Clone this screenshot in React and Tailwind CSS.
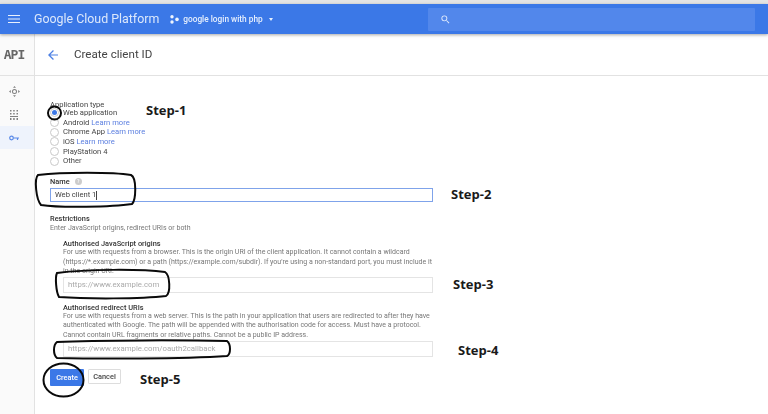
const ff = { fontFamily: 'Roboto, "Liberation Sans", sans-serif' };

function Radio({ checked }) {
  return (
    <span className="w-[9px] h-[9px] rounded-full border border-[#c8c8c8] bg-white flex items-center justify-center shrink-0">
      {checked && <span className="w-[5px] h-[5px] rounded-full bg-[#3b78e7]" />}
    </span>
  );
}

function Option({ label, learn, checked }) {
  return (
    <div className="h-[9.7px] flex items-center gap-[4px] text-[7.6px] text-[#444] leading-none">
      <Radio checked={checked} />
      <span>{label}{learn && <span className="text-[#5b7fe0]"> Learn more</span>}</span>
    </div>
  );
}

function Step({ className, children }) {
  return (
    <div className={"absolute text-[13px] font-bold leading-none text-[#1a1a1a] " + className} style={{ fontFamily: '"Open Sans", "Noto Sans", sans-serif' }}>
      {children}
    </div>
  );
}

export default function App() {
  return (
    <div className="relative w-[768px] h-[414px] overflow-hidden bg-white flex flex-col" style={ff}>
      <div className="h-[4px] bg-[#e4e4e4] shrink-0" />
      <header className="h-[30px] shrink-0 bg-[#3b78e7] flex items-center shadow-[0_1px_3px_rgba(0,0,0,0.35)] z-10 blur-[0.35px]">
        <svg className="ml-[8px] w-[12px] h-[8px]" viewBox="0 0 12 8"><path d="M0 .5h12M0 4h12M0 7.500h12" stroke="#e8f0fd" strokeWidth="1" /></svg>
        <span className="ml-[14px] text-[12.4px] text-[#dce8fb] leading-none whitespace-nowrap">Google Cloud Platform</span>
        <svg className="ml-[11px] w-[10px] h-[9px]" viewBox="0 0 10 9" fill="#eef4fe"><circle cx="2" cy="1.700" r="1.700" /><circle cx="2" cy="7" r="1.700" /><circle cx="7" cy="4.400" r="1.800" /></svg>
        <span className="ml-[3px] text-[8.3px] font-medium text-[#e6effd] leading-none whitespace-nowrap">google login with php</span>
        <span className="ml-[6px] w-0 h-0 border-x-[2.5px] border-x-transparent border-t-[3px] border-t-[#e6effd]" />
        <div className="ml-[155px] w-[327px] h-[23px] bg-[#5287eb] rounded-[1px] flex items-center pl-[12px]">
          <svg className="w-[11px] h-[11px]" viewBox="0 0 24 24" fill="#e3ecfc"><path d="M15.500 14h-.79l-.28-.27A6.470 6.470 0 0 0 16 9.500 6.500 6.500 0 1 0 9.500 16c1.610 0 3.090-.59 4.230-1.570l.27.28v.79l5 4.990L20.490 19l-4.990-5zm-6 0C7.010 14 5 11.990 5 9.500S7.010 5 9.500 5 14 7.010 14 9.500 11.990 14 9.500 14z" /></svg>
        </div>
      </header>

      <div className="flex-1 flex min-h-0">
        <aside className="w-[35px] shrink-0 border-r border-[#e2e2e2] bg-[#fafafa] flex flex-col blur-[0.35px]">
          <div className="h-[42px] shrink-0 border-b border-[#e2e2e2] flex items-center justify-center pr-[6px] text-[13px] font-bold tracking-[-1px] text-[#666] leading-none" style={{ fontFamily: '"DejaVu Sans Mono", monospace' }}>API</div>
          <div className="h-[23px] mt-[4px] flex items-center justify-center pr-[6px]">
            <svg className="w-[11px] h-[11px]" viewBox="0 0 12 12" fill="none" stroke="#808080" strokeWidth="1.100"><circle cx="6" cy="6" r="2.200" /><path d="M6 0l1.600 2H4.400zM6 12l1.600-2H4.400zM0 6l2-1.600v3.200zM12 6l-2-1.600v3.200z" fill="#808080" stroke="none" /></svg>
          </div>
          <div className="h-[23px] flex items-center justify-center pr-[6px]">
            <svg className="w-[8px] h-[10px]" viewBox="0 0 8 10" fill="#808080"><path d="M0 0h1.500v1.500H0zM3.200 0h1.500v1.500H3.200zM6.500 0H8v1.500H6.500zM0 3h1.500v1.500H0zM3.200 3h1.500v1.500H3.200zM6.500 3H8v1.500H6.500zM0 6h8v1H0zM0 8h1.500v2H0zM3.200 8h1.500v2H3.200zM6.500 8H8v2H6.500z" /></svg>
          </div>
          <div className="h-[23px] bg-[#eef3fc] flex items-center justify-center pr-[6px]">
            <svg className="w-[10px] h-[6px]" viewBox="0 0 10 6" fill="none"><circle cx="2.500" cy="3" r="1.800" stroke="#5a8ae8" strokeWidth="1.200" /><path d="M4.300 3H10M8.500 3v2" stroke="#5a8ae8" strokeWidth="1.200" /></svg>
          </div>
        </aside>

        <main className="flex-1 min-w-0 flex flex-col blur-[0.4px]">
          <div className="h-[42px] shrink-0 border-b border-[#e2e2e2] flex items-center pl-[12px]">
            <svg className="w-[12px] h-[12px]" viewBox="0 0 24 24" fill="#4d80e4"><path d="M22 11H6.800l7-7L12 2 2 12l10 10 1.800-2-7-7H22z" /></svg>
            <span className="ml-[15px] mt-[1px] text-[11.6px] text-[#444] leading-none">Create client ID</span>
          </div>

          <div className="pl-[15px] w-[398px] pt-[25px]">
            <div className="text-[7.6px] text-[#444] leading-none h-[7px]">Application type</div>
            <Option label="Web application" checked />
            <Option label="Android" learn />
            <Option label="Chrome App" learn />
            <Option label="iOS" learn />
            <Option label="PlayStation 4" />
            <Option label="Other" />

            <div className="mt-[9px] h-[13px] flex items-center gap-[5px] text-[7.400px] font-medium text-[#333] leading-none">
              Name
              <span className="w-[7px] h-[7px] rounded-full bg-[#ccc] text-white text-[5px] flex items-center justify-center">?</span>
            </div>
            <div className="h-[14px] border border-[#7fa3ea] flex items-center pl-[4px] text-[7.600px] text-[#444] leading-none">
              Web client 1<span className="w-px h-[9px] bg-[#444]" />
            </div>

            <div className="mt-[12px] text-[7.400px] font-medium text-[#333] leading-[9px]">Restrictions</div>
            <div className="text-[7px] text-[#777] leading-[10px]">Enter JavaScript origins, redirect URIs or both</div>

            <div className="pl-[13px] mt-[6px]">
              <div className="text-[7.400px] font-medium text-[#333] leading-[9px]">Authorised JavaScript origins</div>
              <div className="text-[7px] text-[#777] leading-[9.500px] whitespace-nowrap">
                <div>For use with requests from a browser. This is the origin URI of the client application. It cannot contain a wildcard</div>
                <div>(https://*.example.com) or a path (https://example.com/subdir). If you're using a non-standard port, you must include it</div>
                <div>in the origin URI.</div>
              </div>
              <div className="h-[16px] border border-[#e4e4e4] flex items-center pl-[4px] text-[7.800px] text-[#aaa] leading-none">https://www.example.com</div>

              <div className="mt-[10px] text-[7.400px] font-medium text-[#333] leading-[9px]">Authorised redirect URIs</div>
              <div className="text-[7px] text-[#777] leading-[9.500px] whitespace-nowrap">
                <div>For use with requests from a web server. This is the path in your application that users are redirected to after they have</div>
                <div>authenticated with Google. The path will be appended with the authorisation code for access. Must have a protocol.</div>
                <div>Cannot contain URL fragments or relative paths. Cannot be a public IP address.</div>
              </div>
              <div className="mt-[1px] h-[16px] border border-[#e4e4e4] flex items-center pl-[4px] text-[7.800px] text-[#aaa] leading-none">https://www.example.com/oauth2callback</div>
            </div>

            <div className="mt-[12px] flex items-start gap-[4px]">
              <button className="w-[34px] h-[17px] bg-[#3b78e7] rounded-[1px] text-white text-[7.400px] font-medium leading-none">Create</button>
              <button className="w-[33px] h-[15px] bg-white border border-[#ddd] rounded-[1px] text-[#444] text-[7.400px] font-medium leading-none">Cancel</button>
            </div>
          </div>
        </main>
      </div>

      <Step className="left-[146px] top-[104px]">Step-1</Step>
      <Step className="left-[451px] top-[188px]">Step-2</Step>
      <Step className="left-[453px] top-[278px]">Step-3</Step>
      <Step className="left-[458px] top-[344px]">Step-4</Step>
      <Step className="left-[140px] top-[373px]">Step-5</Step>

      <svg className="absolute left-0 top-0 w-[768px] h-[414px] pointer-events-none" viewBox="0 0 768 414" fill="none" stroke="#0a0a0a" strokeWidth="2">
        <ellipse cx="54.500" cy="113" rx="6.500" ry="6.500" />
        <path d="M38 175c25-3 75-3 93 0 6 3 5 25 1 29-20 3-72 4-91 1-5-6-7-26-3-30z" />
        <path d="M57 273c30-4 85-4 108-1 5 3 6 21 1 24-25 3-80 3-107 1-3-5-4-20-2-24z" />
        <path d="M57 342c40-2 130-2 170-1 4 3 4 13 0 15-45 3-130 3-170 2-4-3-4-13 0-16z" />
        <ellipse cx="63.500" cy="380" rx="20" ry="16.500" />
      </svg>
    </div>
  );
}
